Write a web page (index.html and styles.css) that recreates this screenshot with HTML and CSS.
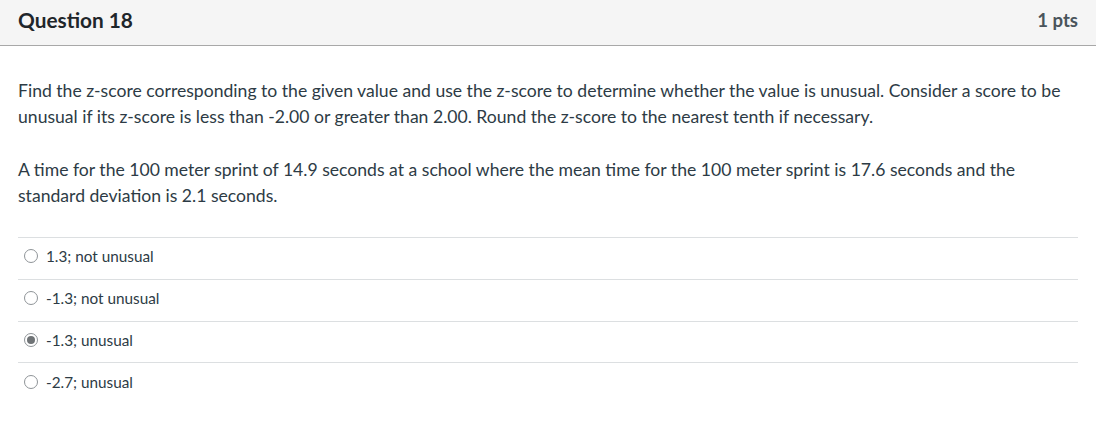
FILE: index.html
```html
<!DOCTYPE html>
<html>
<head>
<meta charset="utf-8">
<link rel="stylesheet" href="styles.css">
</head>
<body>
<div class="question">
  <div class="header">
    <span class="title">Question 18</span>
    <span class="pts">1 pts</span>
  </div>
  <div class="content">
    <div class="text">
      <p>Find the z-score corresponding to the given value and use the z-score to determine whether the value is unusual. Consider a score to be unusual if its z-score is less than -2.00 or greater than 2.00. Round the z-score to the nearest tenth if necessary.</p>
      <p>A time for the 100 meter sprint of 14.9 seconds at a school where the mean time for the 100 meter sprint is 17.6 seconds and the standard deviation is 2.1 seconds.</p>
    </div>
    <div class="answers">
      <div class="answer"><span class="radio"></span><span>1.3; not unusual</span></div>
      <div class="answer"><span class="radio"></span><span>-1.3; not unusual</span></div>
      <div class="answer"><span class="radio checked"></span><span>-1.3; unusual</span></div>
      <div class="answer"><span class="radio"></span><span>-2.7; unusual</span></div>
    </div>
  </div>
</div>
</body>
</html>
```

FILE: styles.css
```css
html, body {
  margin: 0;
  padding: 0;
  background: #fff;
}
body {
  font-family: Lato, "Open Sans", sans-serif;
  color: #2d3b45;
}
.header {
  height: 46px;
  box-sizing: border-box;
  background: #f5f5f5;
  border-bottom: 1px solid #a8a8a8;
  display: flex;
  align-items: center;
  justify-content: space-between;
  padding: 0 18px 6px 18px;
}
.title {
  font-size: 20.8px;
  font-weight: 700;
  color: #1f262b;
}
.pts {
  font-size: 18.6px;
  font-weight: 700;
  color: #4a545b;
}
.content {
  padding: 32px 18px 0 18px;
}
.text p {
  margin: 0 0 27px 0;
  font-size: 17.6px;
  line-height: 26px;
}
.text p:last-child {
  margin-bottom: 28px;
}
.answers {
  display: flex;
  flex-direction: column;
}
.answer {
  height: 41.8px;
  box-sizing: border-box;
  border-top: 1px solid #dcdfe1;
  display: flex;
  align-items: center;
  gap: 8px;
  padding-left: 6px;
  padding-bottom: 4px;
  font-size: 15.3px;
  color: #2d3b45;
}
.radio {
  width: 12px;
  height: 12px;
  border: 1px solid #8f9498;
  border-radius: 50%;
  box-sizing: content-box;
  display: inline-flex;
  align-items: center;
  justify-content: center;
  background: #fff;
}
.radio.checked::after {
  content: "";
  width: 8px;
  height: 8px;
  border-radius: 50%;
  background: #6f7376;
}
```
